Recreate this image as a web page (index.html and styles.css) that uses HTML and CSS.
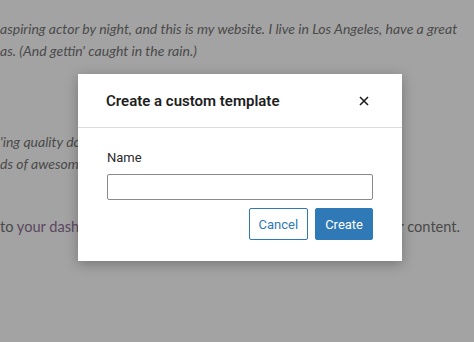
FILE: index.html
```html
<!DOCTYPE html>
<html lang="en">
<head>
<meta charset="utf-8">
<title>Create a custom template</title>
<link rel="stylesheet" href="styles.css">
</head>
<body>
<main class="page">
  <p class="line italic l1">aspiring actor by night, and this is my website. I live in Los Angeles, have a great</p>
  <p class="line italic l2">as. (And gettin' caught in the rain.)</p>
  <p class="line italic l3">'ing quality doesn't come cheap</p>
  <p class="line italic l4">ds of awesome</p>
  <p class="line l5"><span class="left">to <a class="link" href="#">your dashboard</a></span><span class="right">r content.</span></p>
</main>
<div class="overlay">
  <div class="modal" role="dialog" aria-labelledby="t">
    <div class="modal-header">
      <h1 id="t" class="modal-title">Create a custom template</h1>
      <button class="close" aria-label="Close">
        <svg width="24" height="24" viewBox="0 0 24 24"><path d="M8 8 L16 16 M16 8 L8 16" stroke="#1e1e1e" stroke-width="1.6" fill="none"/></svg>
      </button>
    </div>
    <div class="modal-body">
      <label class="label" for="n">Name</label>
      <input id="n" class="input" type="text">
      <div class="actions">
        <button class="btn btn-secondary">Cancel</button>
        <button class="btn btn-primary">Create</button>
      </div>
    </div>
  </div>
</div>
</body>
</html>
```
FILE: styles.css
```css
html, body {
  margin: 0;
  padding: 0;
}
body {
  width: 474px;
  height: 342px;
  overflow: hidden;
  background: #a3a3a3;
  font-family: "Lato", "Open Sans", sans-serif;
  position: relative;
}
.page {
  padding-top: 18px;
}
.line {
  margin: 0;
  font-size: 14px;
  line-height: 22px;
  color: #4a4a4a;
  white-space: nowrap;
}
.italic { font-style: italic; }
.l3 { margin-top: 69px; }
.l5 {
  margin-top: 41px;
  display: flex;
  justify-content: space-between;
  padding-right: 14px;
  font-size: 14.6px;
}
.link {
  color: #5b4761;
  text-decoration: none;
}
.overlay {
  position: absolute;
  inset: 0;
  padding: 74px 0 0 78px;
  box-sizing: border-box;
}
.modal {
  width: 324px;
  background: #fff;
  box-shadow: 0 3px 12px rgba(0,0,0,0.28);
  font-family: "Roboto", "Liberation Sans", sans-serif;
  color: #1e1e1e;
}
.modal-header {
  height: 53px;
  border-bottom: 1px solid #dcdcdc;
  display: flex;
  align-items: center;
  justify-content: space-between;
  padding: 0 26px 0 28px;
}
.modal-title {
  margin: 0;
  font-size: 15px;
  font-weight: 600;
  color: #1e1e1e;
}
.close {
  width: 24px;
  height: 24px;
  padding: 0;
  border: 0;
  background: none;
  display: flex;
}
.modal-body {
  padding: 22px 29px 21px 29px;
  display: flex;
  flex-direction: column;
}
.label {
  font-size: 13px;
  line-height: 16px;
  color: #2b2b2b;
}
.input {
  margin-top: 8px;
  height: 26px;
  box-sizing: border-box;
  border: 1px solid #8a8a8a;
  border-radius: 2px;
  font: inherit;
}
.actions {
  margin-top: 8px;
  display: flex;
  justify-content: flex-end;
  gap: 7px;
}
.btn {
  height: 32px;
  box-sizing: border-box;
  border-radius: 2px;
  font-family: "Roboto", "Liberation Sans", sans-serif;
  font-size: 13px;
  padding: 0 9px;
}
.btn-secondary {
  background: #fff;
  border: 1px solid #2f79b6;
  color: #2f79b6;
}
.btn-primary {
  background: #2f79b6;
  border: 1px solid #2f79b6;
  color: #fff;
}
```
